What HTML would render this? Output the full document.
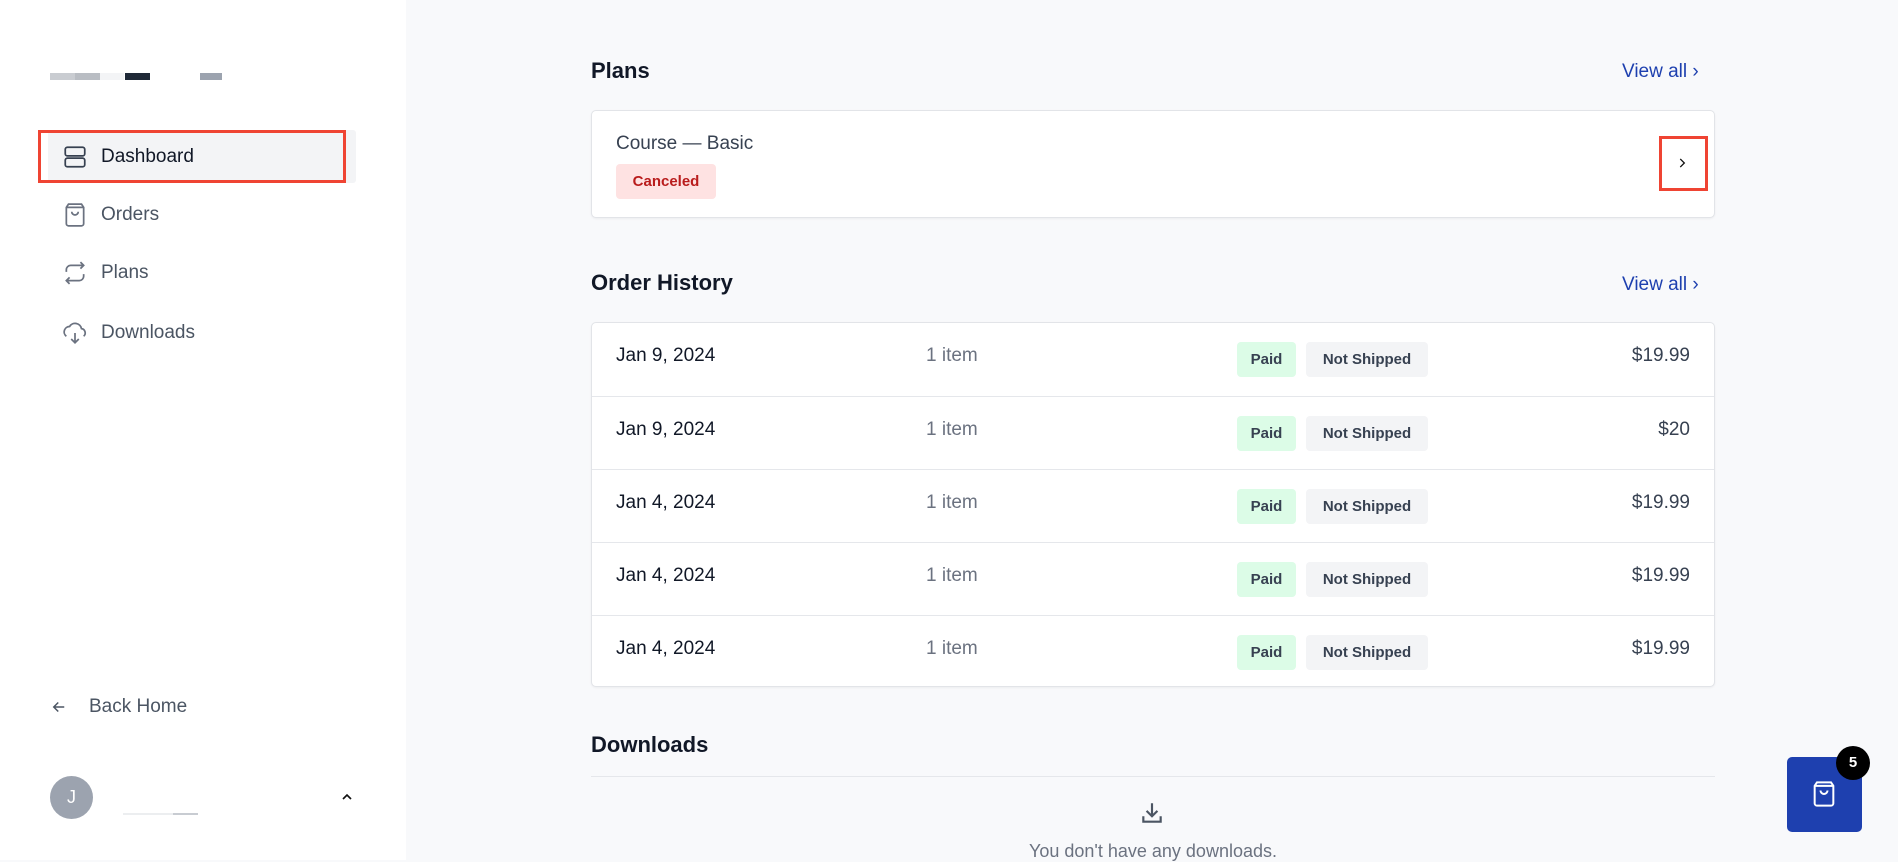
<!DOCTYPE html>
<html><head><meta charset="utf-8"><style>
*{box-sizing:border-box;margin:0;padding:0}
body{width:1898px;height:860px;overflow:hidden;background:#f8f9fb;font-family:"Liberation Sans",sans-serif;position:relative;color:#111827}
.side{position:absolute;left:0;top:0;width:406px;height:860px;background:#fff}
.abs{position:absolute}
.nav{position:absolute;left:38px;width:318px;height:53px;display:flex;align-items:center;font-size:19px;color:#4b5563}
.nav svg{position:absolute;left:24px}
.nav span{position:absolute;left:63px}
.h{position:absolute;left:591px;font-size:22px;font-weight:bold;color:#111827}
.va{position:absolute;left:1622px;font-size:19px;color:#1e40af}
.card{position:absolute;left:591px;width:1124px;background:#fff;border:1px solid #e2e4e8;border-radius:5px;box-shadow:0 1px 2px rgba(0,0,0,.05)}
.row{position:absolute;left:0;width:100%;height:73px;border-top:1px solid #e5e7eb}
.row:first-child{border-top:none}
.row .d{position:absolute;left:24px;top:22px;font-size:19px;color:#111827}
.row .i{position:absolute;left:334px;top:22px;font-size:19px;color:#6b7280}
.row .p{position:absolute;left:645px;top:19px;width:59px;height:35px;background:#dcfce7;border-radius:4px;color:#374151;font-size:15px;font-weight:bold;text-align:center;line-height:35px}
.row .n{position:absolute;left:714px;top:19px;width:122px;height:35px;background:#f3f4f6;border-radius:4px;color:#374151;font-size:15px;font-weight:bold;text-align:center;line-height:35px}
.row .pr{position:absolute;right:24px;top:22px;font-size:19px;color:#374151}
</style></head><body>
<div class="side">
 <div class="abs" style="left:50px;top:73px;width:50px;height:7px;background:#c9ccd1"></div>
 <div class="abs" style="left:75px;top:73px;width:25px;height:7px;background:#b9bdc3"></div>
 <div class="abs" style="left:100px;top:73px;width:24px;height:7px;background:#f3f4f6"></div>
 <div class="abs" style="left:125px;top:73px;width:25px;height:7px;background:#1f2937"></div>
 <div class="abs" style="left:200px;top:73px;width:22px;height:7px;background:#9ca3af"></div>
 <div class="abs" style="left:48px;top:130px;width:308px;height:53px;background:#f3f4f6;border-radius:3px"></div>
 <div class="abs" style="left:38px;top:130px;width:308px;height:53px;border:3px solid #ef4433"></div>
 <div class="nav" style="top:130px;color:#111827"><svg width="26" height="26" viewBox="0 0 24 24" fill="none" stroke="#374151" stroke-width="1.6"><rect x="3" y="3" width="18" height="8" rx="2"/><rect x="3" y="13" width="18" height="8" rx="2"/><path d="M6.5 7h.01M6.5 17h.01"/></svg><span>Dashboard</span></div>
 <div class="nav" style="top:188px"><svg width="26" height="26" viewBox="0 0 24 24" fill="none" stroke="#6b7280" stroke-width="1.6"><path d="M6 2h12l2 3v15a2 2 0 0 1-2 2H6a2 2 0 0 1-2-2V5z"/><path d="M4 5h16M9 9a3 3 0 0 0 6 0"/></svg><span>Orders</span></div>
 <div class="nav" style="top:246px"><svg width="26" height="26" viewBox="0 0 24 24" fill="none" stroke="#6b7280" stroke-width="1.6"><path d="M17 2l3 3-3 3M4 11V9a4 4 0 0 1 4-4h12M7 22l-3-3 3-3M20 13v2a4 4 0 0 1-4 4H4"/></svg><span>Plans</span></div>
 <div class="nav" style="top:306px"><svg width="26" height="26" viewBox="0 0 24 24" fill="none" stroke="#6b7280" stroke-width="1.6"><path d="M4 15a5 5 0 0 1 3-9 6 6 0 0 1 11 2 4 4 0 0 1 2 7M12 12v9M8.5 17.5L12 21l3.5-3.5"/></svg><span>Downloads</span></div>
 <svg class="abs" style="left:50px;top:698px" width="18" height="18" viewBox="0 0 24 24" fill="none" stroke="#4b5563" stroke-width="2"><path d="M19 12H5M11 6l-6 6 6 6"/></svg>
 <div class="abs" style="left:89px;top:696px;font-size:19px;color:#4b5563">Back Home</div>
 <div class="abs" style="left:50px;top:776px;width:43px;height:43px;border-radius:50%;background:#9ca3af;color:#fff;font-size:18px;text-align:center;line-height:43px">J</div>
 <div class="abs" style="left:123px;top:813px;width:50px;height:2px;background:#eceef0"></div>
 <div class="abs" style="left:173px;top:813px;width:25px;height:2px;background:#c8ccd2"></div>
 <svg class="abs" style="left:339px;top:789px" width="16" height="16" viewBox="0 0 24 24" fill="none" stroke="#111" stroke-width="2.5"><path d="M6 15l6-6 6 6"/></svg>
</div>

<div class="h" style="top:58px">Plans</div>
<div class="va" style="top:61px">View all&nbsp;›</div>
<div class="card" style="top:110px;height:108px">
 <div class="abs" style="left:24px;top:22px;font-size:19px;color:#374151">Course — Basic</div>
 <div class="abs" style="left:24px;top:53px;width:100px;height:35px;background:#fee2e2;border-radius:4px;color:#b91c1c;font-size:15px;font-weight:bold;text-align:center;line-height:35px">Canceled</div>
 <div class="abs" style="left:1067px;top:25px;width:49px;height:55px;border:3px solid #ef4433"></div>
 <svg class="abs" style="left:1083px;top:45px" width="14" height="14" viewBox="0 0 24 24" fill="none" stroke="#111" stroke-width="2.2"><path d="M9 5l7 7-7 7"/></svg>
</div>

<div class="h" style="top:270px">Order History</div>
<div class="va" style="top:274px">View all&nbsp;›</div>
<div class="card" style="top:322px;height:365px">
 <div class="row" style="top:0"><div class="d">Jan 9, 2024</div><div class="i">1 item</div><div class="p">Paid</div><div class="n">Not Shipped</div><div class="pr">$19.99</div></div>
 <div class="row" style="top:73px"><div class="d">Jan 9, 2024</div><div class="i">1 item</div><div class="p">Paid</div><div class="n">Not Shipped</div><div class="pr">$20</div></div>
 <div class="row" style="top:146px"><div class="d">Jan 4, 2024</div><div class="i">1 item</div><div class="p">Paid</div><div class="n">Not Shipped</div><div class="pr">$19.99</div></div>
 <div class="row" style="top:219px"><div class="d">Jan 4, 2024</div><div class="i">1 item</div><div class="p">Paid</div><div class="n">Not Shipped</div><div class="pr">$19.99</div></div>
 <div class="row" style="top:292px"><div class="d">Jan 4, 2024</div><div class="i">1 item</div><div class="p">Paid</div><div class="n">Not Shipped</div><div class="pr">$19.99</div></div>
</div>

<div class="h" style="top:732px">Downloads</div>
<div class="abs" style="left:591px;top:776px;width:1124px;height:1px;background:#e5e7eb"></div>
<svg class="abs" style="left:1139px;top:800px" width="26" height="26" viewBox="0 0 24 24" fill="none" stroke="#4b5563" stroke-width="2"><path d="M12 3v12M7 10l5 5 5-5M4 15v5h16v-5"/></svg>
<div class="abs" style="left:591px;width:1124px;top:841px;text-align:center;font-size:18px;color:#6b7280">You don't have any downloads.</div>

<div class="abs" style="left:1787px;top:757px;width:75px;height:75px;background:#1e40af;border-radius:5px"></div>
<svg class="abs" style="left:1810px;top:779px" width="28" height="30" viewBox="0 0 24 24" fill="none" stroke="#fff" stroke-width="1.7"><path d="M6 2h12l2 3v15a2 2 0 0 1-2 2H6a2 2 0 0 1-2-2V5z"/><path d="M4 5h16M9 9a3 3 0 0 0 6 0"/></svg>
<div class="abs" style="left:1836px;top:746px;width:34px;height:34px;border-radius:50%;background:#000;color:#fff;font-size:15px;font-weight:bold;text-align:center;line-height:34px">5</div>
</body></html>
